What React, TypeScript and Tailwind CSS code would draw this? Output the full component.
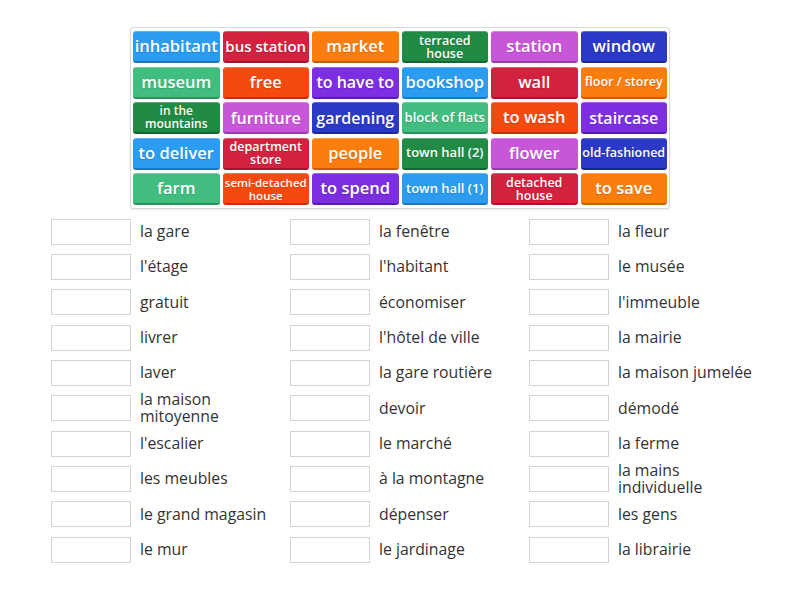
const COLORS = [
  { bg: 'bg-[#2b9cf0]', edge: 'border-b-[#1b76c4]' },
  { bg: 'bg-[#d3223f]', edge: 'border-b-[#a5142c]' },
  { bg: 'bg-[#fb7d0e]', edge: 'border-b-[#c85d00]' },
  { bg: 'bg-[#1f8b45]', edge: 'border-b-[#146630]' },
  { bg: 'bg-[#c757d8]', edge: 'border-b-[#9c3bad]' },
  { bg: 'bg-[#2a39c6]', edge: 'border-b-[#1b2796]' },
  { bg: 'bg-[#42bd80]', edge: 'border-b-[#2a935f]' },
  { bg: 'bg-[#f44a10]', edge: 'border-b-[#bf3405]' },
  { bg: 'bg-[#7b2fe0]', edge: 'border-b-[#5a1cae]' },
];

const TILES: { text: string; size: string }[] = [
  { text: 'inhabitant', size: 'text-[16.5px]' },
  { text: 'bus station', size: 'text-[15px]' },
  { text: 'market', size: 'text-[16.5px]' },
  { text: 'terraced house', size: 'text-[12.5px] leading-[13px] px-3' },
  { text: 'station', size: 'text-[16.5px]' },
  { text: 'window', size: 'text-[16.5px]' },

  { text: 'museum', size: 'text-[16.5px]' },
  { text: 'free', size: 'text-[16.5px]' },
  { text: 'to have to', size: 'text-[16px]' },
  { text: 'bookshop', size: 'text-[16.5px]' },
  { text: 'wall', size: 'text-[16.5px]' },
  { text: 'floor / storey', size: 'text-[12.5px]' },

  { text: 'in the mountains', size: 'text-[12px] leading-[12.5px] px-4' },
  { text: 'furniture', size: 'text-[16px]' },
  { text: 'gardening', size: 'text-[16px]' },
  { text: 'block of flats', size: 'text-[13px]' },
  { text: 'to wash', size: 'text-[16.5px]' },
  { text: 'staircase', size: 'text-[16px]' },

  { text: 'to deliver', size: 'text-[16.5px]' },
  { text: 'department store', size: 'text-[12.5px] leading-[13px] px-2' },
  { text: 'people', size: 'text-[16.5px]' },
  { text: 'town hall (2)', size: 'text-[13px]' },
  { text: 'flower', size: 'text-[16.5px]' },
  { text: 'old-fashioned', size: 'text-[12.5px]' },

  { text: 'farm', size: 'text-[16.5px]' },
  { text: 'semi-detached house', size: 'text-[11.5px] leading-[13px]' },
  { text: 'to spend', size: 'text-[16.5px]' },
  { text: 'town hall (1)', size: 'text-[13px]' },
  { text: 'detached house', size: 'text-[12.5px] leading-[13px] px-4' },
  { text: 'to save', size: 'text-[16.5px]' },
];

const COLS = [
  ['la gare', "l'étage", 'gratuit', 'livrer', 'laver', 'la maison mitoyenne', "l'escalier", 'les meubles', 'le grand magasin', 'le mur'],
  ['la fenêtre', "l'habitant", 'économiser', "l'hôtel de ville", 'la gare routière', 'devoir', 'le marché', 'à la montagne', 'dépenser', 'le jardinage'],
  ['la fleur', 'le musée', "l'immeuble", 'la mairie', 'la maison jumelée', 'démodé', 'la ferme', 'la mains individuelle', 'les gens', 'la librairie'],
];

function Tile({ text, size, index }: { text: string; size: string; index: number }) {
  const c = COLORS[index % COLORS.length];
  return (
    <div
      className={`flex h-[32px] items-center justify-center rounded-[3px] border-b-2 border-t border-t-white/25 ${c.bg} ${c.edge} text-center font-semibold text-white [text-shadow:0_1px_1px_rgba(0,0,0,0.15)] ${size}`}
    >
      <span className="leading-[inherit]">{text}</span>
    </div>
  );
}

function Row({ label }: { label: string }) {
  return (
    <div className="flex h-[35.33px] items-center">
      <div className="h-[26px] w-[80px] shrink-0 border border-[#d3d3d3] bg-white" />
      <div className="ml-[9px] w-[140px] text-[15.8px] leading-[17px] text-[#333]">{label}</div>
    </div>
  );
}

export default function App() {
  return (
    <div className="h-[600px] w-[800px] bg-white font-['Open_Sans',sans-serif]">
      <div className="h-[27px]" />
      <div className="mx-auto w-[540px] rounded-[3px] border border-[#d8d8d8] bg-white px-[2px] py-[3px] shadow-[0_1px_2px_rgba(0,0,0,0.08)]">
        <div className="grid grid-cols-6 gap-x-[3px] gap-y-[3.5px]">
          {TILES.map((t, i) => (
            <Tile key={t.text} text={t.text} size={t.size} index={i} />
          ))}
        </div>
      </div>
      <div className="mt-[5px] grid w-max grid-cols-[239px_239px_239px] pl-[51px]">
        {COLS.map((col, ci) => (
          <div key={ci} className="flex flex-col">
            {col.map((label) => (
              <Row key={label} label={label} />
            ))}
          </div>
        ))}
      </div>
    </div>
  );
}
